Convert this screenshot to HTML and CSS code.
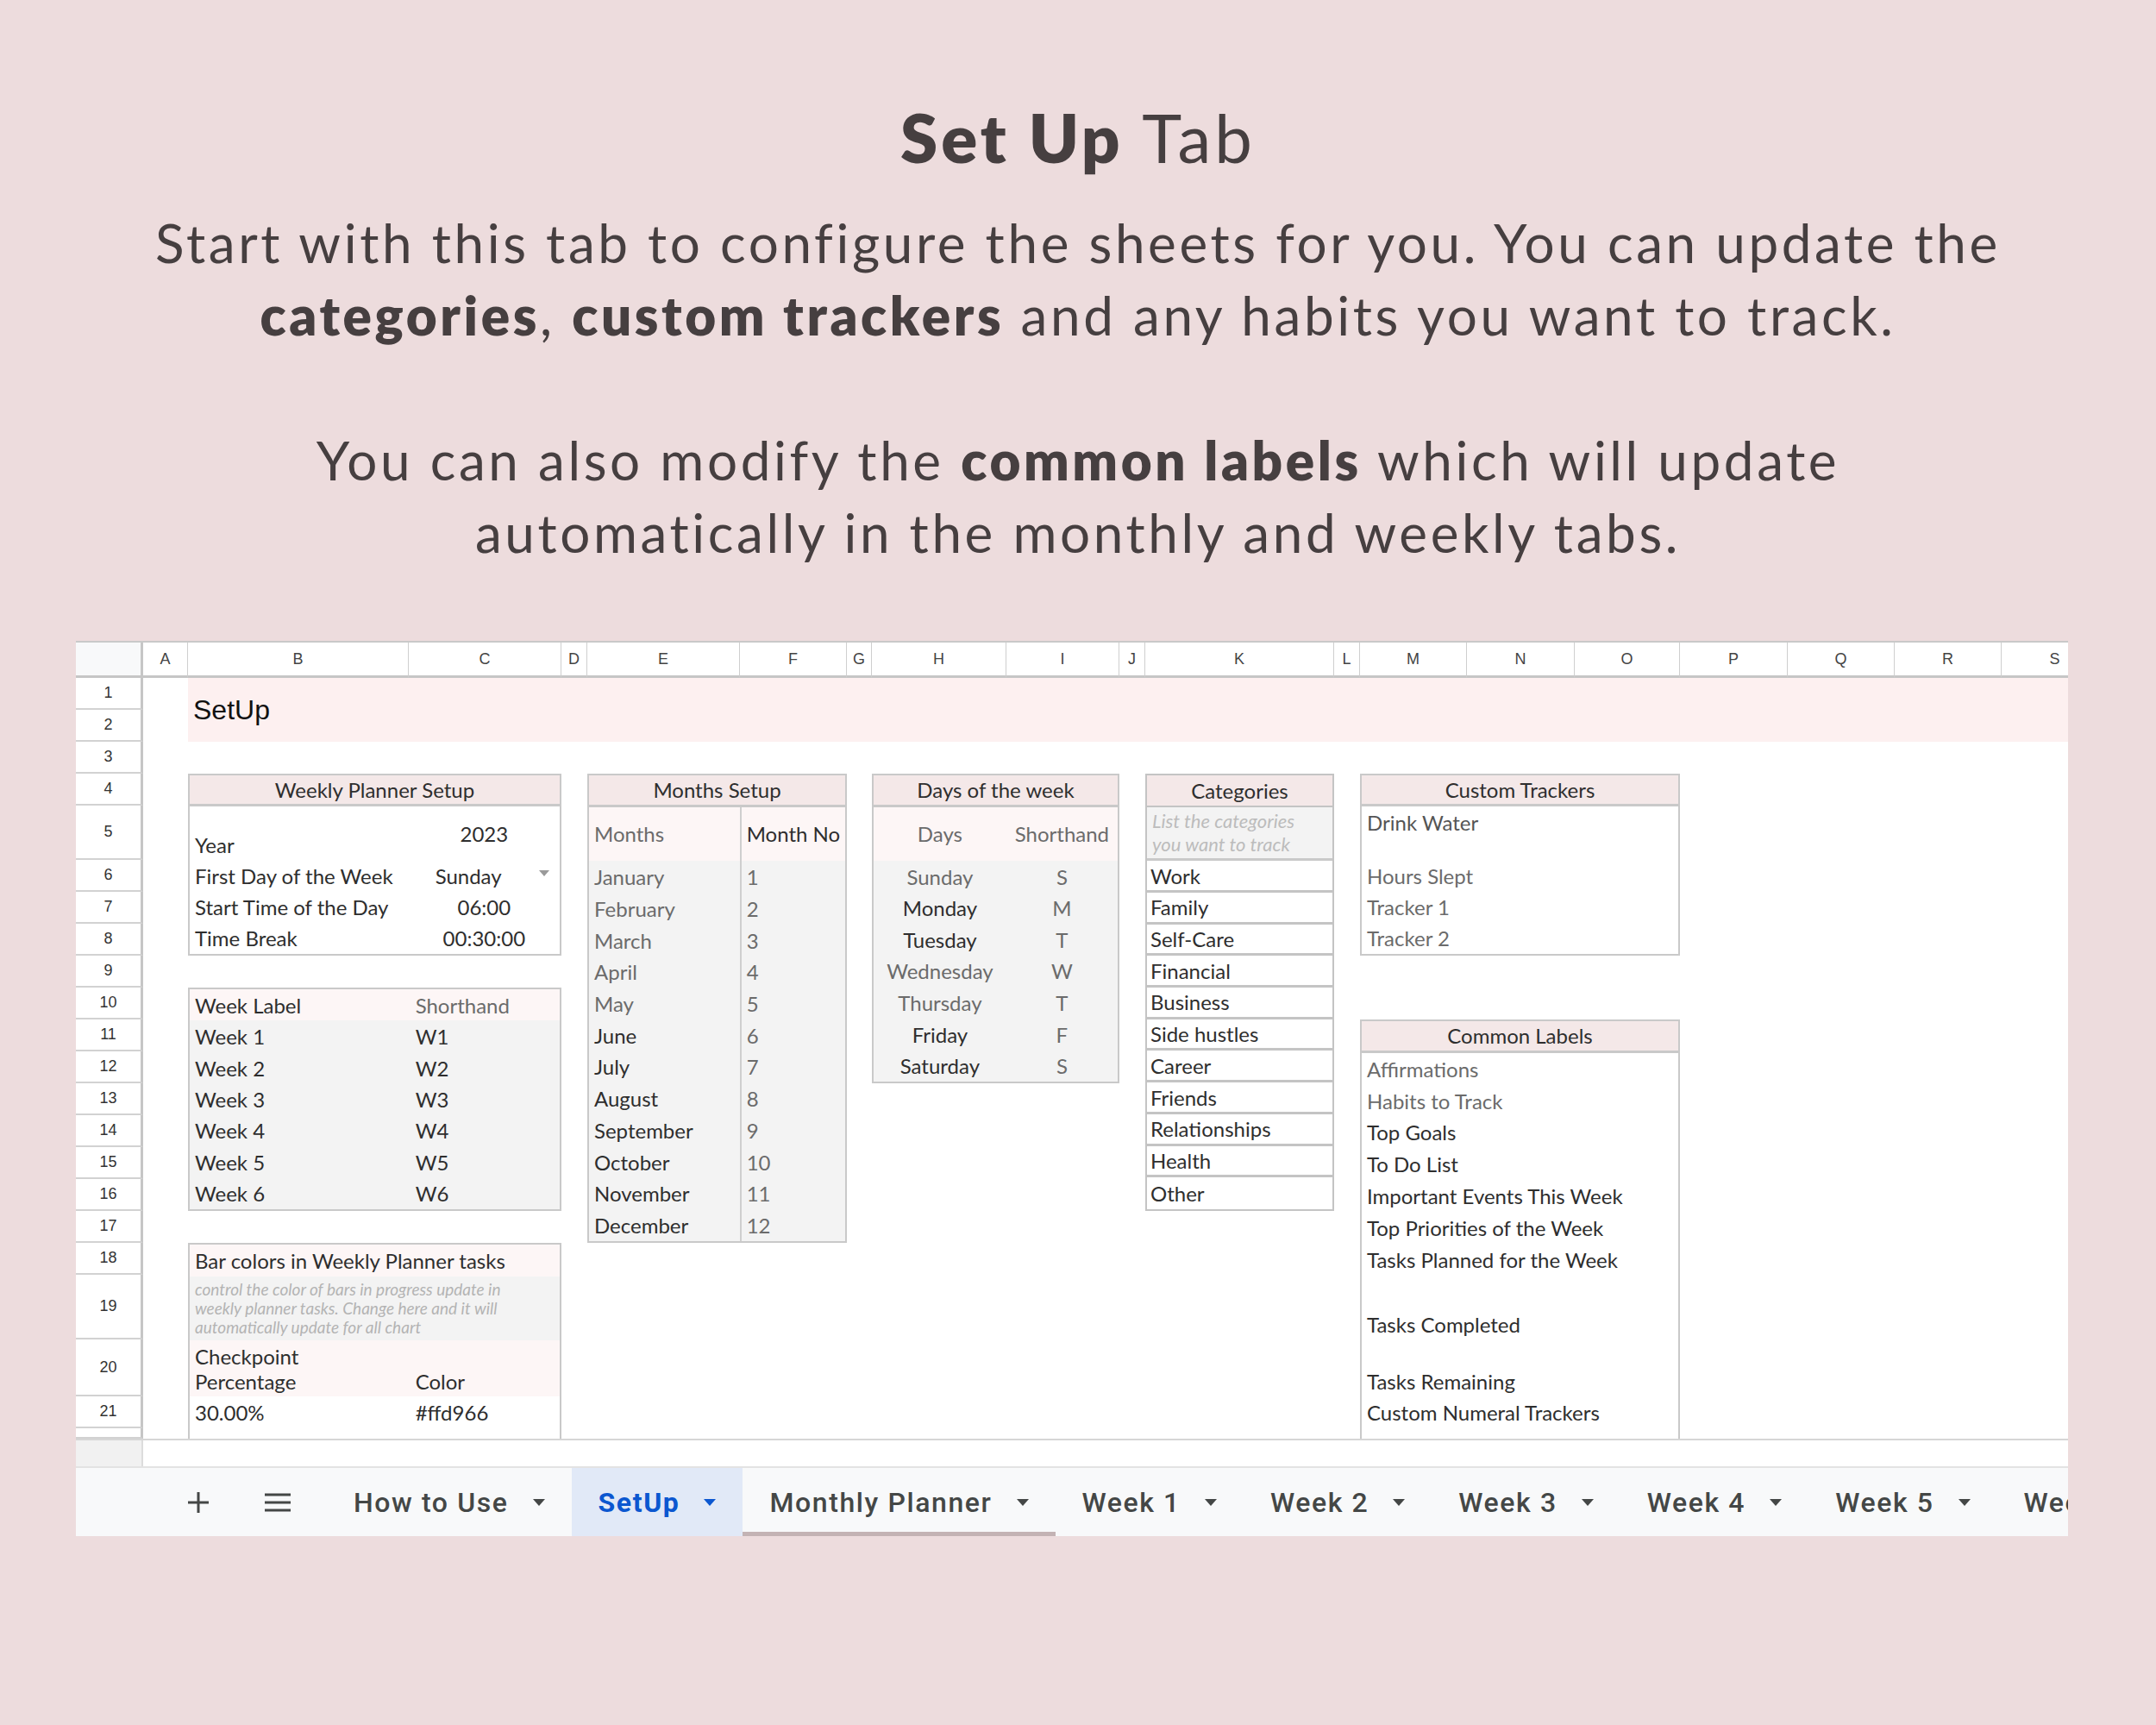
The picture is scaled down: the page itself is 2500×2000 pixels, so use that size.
FILE: index.html
```html
<!DOCTYPE html>
<html lang="en">
<head>
  <meta charset="UTF-8" />
  <title>Set Up Tab</title>
  <link rel="stylesheet" href="styles.css">
</head>
<body>
  <div class="intro">
    <h1><b>Set Up</b> Tab</h1>
    <p>Start with this tab to configure the sheets for you. You can update the<br><b>categories</b>, <b>custom trackers</b> and any habits you want to track.</p>
    <p>You can also modify the <b>common labels</b> which will update<br>automatically in the monthly and weekly tabs.</p>
  </div>

  <div class="sheet">
    <div class="grid">
      <div class="colhead corner"></div>
      <div class="colhead">A</div>
      <div class="colhead">B</div>
      <div class="colhead">C</div>
      <div class="colhead">D</div>
      <div class="colhead">E</div>
      <div class="colhead">F</div>
      <div class="colhead">G</div>
      <div class="colhead">H</div>
      <div class="colhead">I</div>
      <div class="colhead">J</div>
      <div class="colhead">K</div>
      <div class="colhead">L</div>
      <div class="colhead">M</div>
      <div class="colhead">N</div>
      <div class="colhead">O</div>
      <div class="colhead">P</div>
      <div class="colhead">Q</div>
      <div class="colhead">R</div>
      <div class="colhead">S</div>

      <div class="rowhead">1</div>
      <div class="rowhead">2</div>
      <div class="rowhead">3</div>
      <div class="rowhead">4</div>
      <div class="rowhead">5</div>
      <div class="rowhead">6</div>
      <div class="rowhead">7</div>
      <div class="rowhead">8</div>
      <div class="rowhead">9</div>
      <div class="rowhead">10</div>
      <div class="rowhead">11</div>
      <div class="rowhead">12</div>
      <div class="rowhead">13</div>
      <div class="rowhead">14</div>
      <div class="rowhead">15</div>
      <div class="rowhead">16</div>
      <div class="rowhead">17</div>
      <div class="rowhead">18</div>
      <div class="rowhead">19</div>
      <div class="rowhead">20</div>
      <div class="rowhead">21</div>
      <div class="rowhead"></div>

      <div class="title-band">SetUp</div>

      <!-- weekly planner setup -->
      <div class="blk b-wps">
        <div class="bh">Weekly Planner Setup</div>
        <div class="end">Year</div>
        <div class="c">2023</div>
        <div>First Day of the Week</div>
        <div class="drop"><span>Sunday</span><i class="caret small"></i></div>
        <div>Start Time of the Day</div>
        <div class="c">06:00</div>
        <div>Time Break</div>
        <div class="c">00:30:00</div>
      </div>

      <div class="blk b-weeks">
        <div class="pink">Week Label</div>
        <div class="pink muted">Shorthand</div>
        <div class="grey">Week 1</div><div class="grey">W1</div>
        <div class="grey">Week 2</div><div class="grey">W2</div>
        <div class="grey">Week 3</div><div class="grey">W3</div>
        <div class="grey">Week 4</div><div class="grey">W4</div>
        <div class="grey">Week 5</div><div class="grey">W5</div>
        <div class="grey">Week 6</div><div class="grey">W6</div>
      </div>

      <div class="blk b-bar">
        <div class="span pink">Bar colors in Weekly Planner tasks</div>
        <div class="span grey note">control the color of bars in progress update in<br>weekly planner tasks. Change here and it will<br>automatically update for all chart</div>
        <div class="pink end wrap">Checkpoint<br>Percentage</div>
        <div class="pink end">Color</div>
        <div>30.00%</div>
        <div>#ffd966</div>
        <div></div><div></div>
      </div>

      <!-- months -->
      <div class="blk b-months">
        <div class="bh">Months Setup</div>
        <div class="pink muted">Months</div>
        <div class="pink divl">Month No</div>
        <div class="grey muted">January</div><div class="grey divl muted">1</div>
        <div class="grey muted">February</div><div class="grey divl muted">2</div>
        <div class="grey muted">March</div><div class="grey divl muted">3</div>
        <div class="grey muted">April</div><div class="grey divl muted">4</div>
        <div class="grey muted">May</div><div class="grey divl muted">5</div>
        <div class="grey">June</div><div class="grey divl muted">6</div>
        <div class="grey">July</div><div class="grey divl muted">7</div>
        <div class="grey">August</div><div class="grey divl muted">8</div>
        <div class="grey">September</div><div class="grey divl muted">9</div>
        <div class="grey">October</div><div class="grey divl muted">10</div>
        <div class="grey">November</div><div class="grey divl muted">11</div>
        <div class="grey">December</div><div class="grey divl muted">12</div>
      </div>

      <!-- days -->
      <div class="blk b-days">
        <div class="bh">Days of the week</div>
        <div class="pink c muted">Days</div>
        <div class="pink c muted">Shorthand</div>
        <div class="grey c muted">Sunday</div><div class="grey c muted">S</div>
        <div class="grey c">Monday</div><div class="grey c muted">M</div>
        <div class="grey c">Tuesday</div><div class="grey c muted">T</div>
        <div class="grey c muted">Wednesday</div><div class="grey c muted">W</div>
        <div class="grey c muted">Thursday</div><div class="grey c muted">T</div>
        <div class="grey c">Friday</div><div class="grey c muted">F</div>
        <div class="grey c">Saturday</div><div class="grey c muted">S</div>
      </div>

      <!-- categories -->
      <div class="blk b-cats">
        <div class="bh">Categories</div>
        <div class="grey note big">List the categories<br>you want to track</div>
        <div>Work</div>
        <div>Family</div>
        <div>Self-Care</div>
        <div>Financial</div>
        <div>Business</div>
        <div>Side hustles</div>
        <div>Career</div>
        <div>Friends</div>
        <div>Relationships</div>
        <div>Health</div>
        <div>Other</div>
      </div>

      <div class="blk b-trackers">
        <div class="bh">Custom Trackers</div>
        <div class="top soft">Drink Water</div>
        <div class="muted">Hours Slept</div>
        <div class="muted">Tracker 1</div>
        <div class="muted">Tracker 2</div>
      </div>

      <div class="blk b-labels">
        <div class="bh">Common Labels</div>
        <div class="muted">Affirmations</div>
        <div class="muted">Habits to Track</div>
        <div>Top Goals</div>
        <div>To Do List</div>
        <div>Important Events This Week</div>
        <div>Top Priorities of the Week</div>
        <div>Tasks Planned for the Week</div>
        <div class="end">Tasks Completed</div>
        <div class="end">Tasks Remaining</div>
        <div>Custom Numeral Trackers</div>
        <div></div>
      </div>
    </div>

    <div class="scroll-strip"><div class="strip-corner"></div></div>

    <div class="tabs">
      <svg class="tool plus" width="26" height="26" viewBox="0 0 26 26"><path d="M13 1v24M1 13h24" stroke="#444746" stroke-width="3"/></svg>
      <svg class="tool menu" width="32" height="24" viewBox="0 0 32 24"><path d="M1 3h30M1 12h30M1 21h30" stroke="#444746" stroke-width="3"/></svg>
      <div class="tab first">How to Use <i class="caret"></i></div>
      <div class="tab active">SetUp <i class="caret"></i></div>
      <div class="tab underline">Monthly Planner <i class="caret"></i></div>
      <div class="tab">Week 1 <i class="caret"></i></div>
      <div class="tab">Week 2 <i class="caret"></i></div>
      <div class="tab">Week 3 <i class="caret"></i></div>
      <div class="tab">Week 4 <i class="caret"></i></div>
      <div class="tab">Week 5 <i class="caret"></i></div>
      <div class="tab">Week 6 <i class="caret"></i></div>
    </div>
  </div>
</body>
</html>
```

FILE: styles.css
```css
body {
  margin: 0;
  width: 2500px;
  min-height: 2000px;
  background: #eddcdd;
  font-family: Lato, 'Open Sans', sans-serif;
  color: #463f40;
}
.intro {
  text-align: center;
  padding-top: 113px;
}
.intro h1 {
  margin: 0;
  font-size: 78px;
  line-height: 92px;
  font-weight: 400;
  letter-spacing: 4px;
}
.intro h1 b {
  font-weight: 800;
}
.intro p {
  margin: 34px 0 0;
  font-size: 62px;
  line-height: 84px;
  letter-spacing: 3.6px;
}
.intro p + p {
  margin-top: 84px;
}
.intro p b {
  font-weight: 800;
}

/* spreadsheet */
.sheet {
  width: 2310px;
  margin: 84px 0 0 88px;
  background: #fff;
  overflow: hidden;
  border-top: 2px solid #c9c9c9;
}
.grid {
  display: grid;
  grid-template-columns: 78px 52px 256px 177px 30px 177px 124px 29px 156px 131px 30px 219px 30px 124px 125px 122px 125px 124px 124px 124px;
  grid-template-rows: 41px repeat(4, 37px) 63px repeat(13, 37px) 75px 66px 37px 12px;
  overflow: hidden;
}
.colhead {
  display: flex;
  align-items: center;
  justify-content: center;
  border-right: 1px solid #cfcfcf;
  border-bottom: 3px solid #c6c6c6;
  font-family: 'Liberation Sans', Arial, sans-serif;
  font-size: 18px;
  color: #444;
  box-sizing: border-box;
}
.colhead.corner {
  background: #f8f9fa;
  border-right: 3px solid #c6c6c6;
}
.rowhead {
  grid-column: 1;
  display: flex;
  align-items: center;
  justify-content: center;
  border-right: 3px solid #c6c6c6;
  border-bottom: 2px solid #d2d2d2;
  font-family: 'Liberation Sans', Arial, sans-serif;
  font-size: 18px;
  color: #333;
  box-sizing: border-box;
}
.title-band {
  grid-column: 3 / -1;
  grid-row: 2 / 4;
  background: #fdf0f0;
  display: flex;
  align-items: center;
  padding-left: 6px;
  font-family: 'Liberation Sans', Arial, sans-serif;
  font-size: 32px;
  color: #111;
}

/* blocks of cells */
.blk {
  display: grid;
  border: 2px solid #c9c9c9;
  background: #fff;
  font-family: Lato, 'Open Sans', sans-serif;
  font-size: 24px;
  color: #2e2e2e;
  box-sizing: border-box;
  min-width: 0;
  min-height: 0;
  overflow: hidden;
}
.blk > div {
  display: flex;
  align-items: center;
  padding: 0 6px;
  white-space: nowrap;
  min-width: 0;
  min-height: 0;
  box-sizing: border-box;
}
.blk > .bh {
  grid-column: 1 / -1;
  justify-content: center;
  background: #f4e8e8;
  border-bottom: 3px solid #c9c9c9;
}
.blk > .span { grid-column: 1 / -1; }
.blk > .c { justify-content: center; }
.blk > .end { align-items: flex-end; padding-bottom: 3px; }
.blk > .top { align-items: flex-start; padding-top: 4px; }
.blk > .wrap { line-height: 29px; }
.blk > .pink { background: #fdf6f6; }
.blk > .grey { background: #f3f3f3; }
.blk > .divl { border-left: 2px solid #cfcfcf; }
.muted { color: #6b6b6b; }
.soft { color: #555; }
.blk > .note {
  font-style: italic;
  font-size: 19px;
  line-height: 22px;
  color: #b3b3b3;
}
.blk > .note.big {
  font-size: 22px;
  line-height: 27px;
  color: #bcbcbc;
  border-bottom: 3px solid #c9c9c9;
}
.drop {
  justify-content: space-between;
}
.drop span { padding-left: 25px; }

.b-wps {
  grid-column: 3 / 5;
  grid-row: 5 / 10;
  grid-template-columns: 256fr 177fr;
  grid-template-rows: 37fr 63fr 37fr 37fr 37fr;
}
.b-weeks {
  grid-column: 3 / 5;
  grid-row: 11 / 18;
  grid-template-columns: 256fr 177fr;
  grid-template-rows: repeat(7, 1fr);
}
.b-weeks > div:nth-child(even) { padding-left: 8px; }
.b-bar {
  grid-column: 3 / 5;
  grid-row: 19 / 24;
  grid-template-columns: 256fr 177fr;
  grid-template-rows: 37fr 75fr 66fr 37fr 12fr;
  border-bottom: none;
}
.b-bar > div:nth-child(4),
.b-bar > div:nth-child(6) { padding-left: 8px; }
.b-months {
  grid-column: 6 / 8;
  grid-row: 5 / 19;
  grid-template-columns: 177fr 124fr;
  grid-template-rows: 37fr 63fr repeat(12, 37fr);
}
.b-days {
  grid-column: 9 / 11;
  grid-row: 5 / 14;
  grid-template-columns: 156fr 131fr;
  grid-template-rows: 37fr 63fr repeat(7, 37fr);
}
.b-cats {
  grid-column: 12 / 13;
  grid-row: 5 / 18;
  grid-template-columns: 1fr;
  grid-template-rows: 37fr 63fr repeat(11, 37fr);
  border-color: #c4c4c4;
}
.b-cats > .bh {
  border-bottom: 2px solid #c4c4c4;
}
.b-cats > div:nth-child(n+3) {
  border-bottom: 3px solid #c4c4c4;
  padding-left: 4px;
}
.b-cats > div:last-child { border-bottom: none; }
.b-trackers {
  grid-column: 14 / 17;
  grid-row: 5 / 10;
  grid-template-columns: 1fr;
  grid-template-rows: 37fr 63fr 37fr 37fr 37fr;
}
.b-labels {
  grid-column: 14 / 17;
  grid-row: 12 / 24;
  grid-template-columns: 1fr;
  grid-template-rows: 37fr repeat(7, 37fr) 75fr 66fr 37fr 12fr;
  border-bottom: none;
}

.caret {
  display: inline-block;
  width: 0;
  height: 0;
  border-left: 7px solid transparent;
  border-right: 7px solid transparent;
  border-top: 8px solid currentColor;
}
.caret.small {
  border-left-width: 6px;
  border-right-width: 6px;
  border-top-width: 7px;
  color: #9a9a9a;
  margin-right: 6px;
  margin-top: -6px;
}

.scroll-strip {
  height: 30px;
  border-top: 2px solid #d6d6d6;
  display: flex;
}
.strip-corner {
  width: 78px;
  background: #f1f1f1;
  border-right: 2px solid #dcdcdc;
  box-sizing: border-box;
}

/* sheet tabs */
.tabs {
  height: 81px;
  background: #f8f9fa;
  border-top: 2px solid #e3e3e3;
  display: flex;
  align-items: stretch;
  font-family: Roboto, 'Liberation Sans', sans-serif;
  font-size: 32px;
  font-weight: 500;
  letter-spacing: 1.6px;
  color: #444746;
  white-space: nowrap;
  box-sizing: border-box;
}
.tool { align-self: center; flex: none; }
.tool.plus { margin-left: 129px; }
.tool.menu { margin-left: 63px; }
.tab {
  display: flex;
  align-items: center;
  gap: 28px;
  padding: 0 31px;
  flex: none;
  box-sizing: border-box;
}
.tab.first { margin-left: 41px; }
.tab.active {
  background: #e1e9f7;
  color: #0b57d0;
  font-weight: 700;
}
.tab.underline {
  border-bottom: 5px solid #c3b3b4;
  padding-top: 5px;
}
```
